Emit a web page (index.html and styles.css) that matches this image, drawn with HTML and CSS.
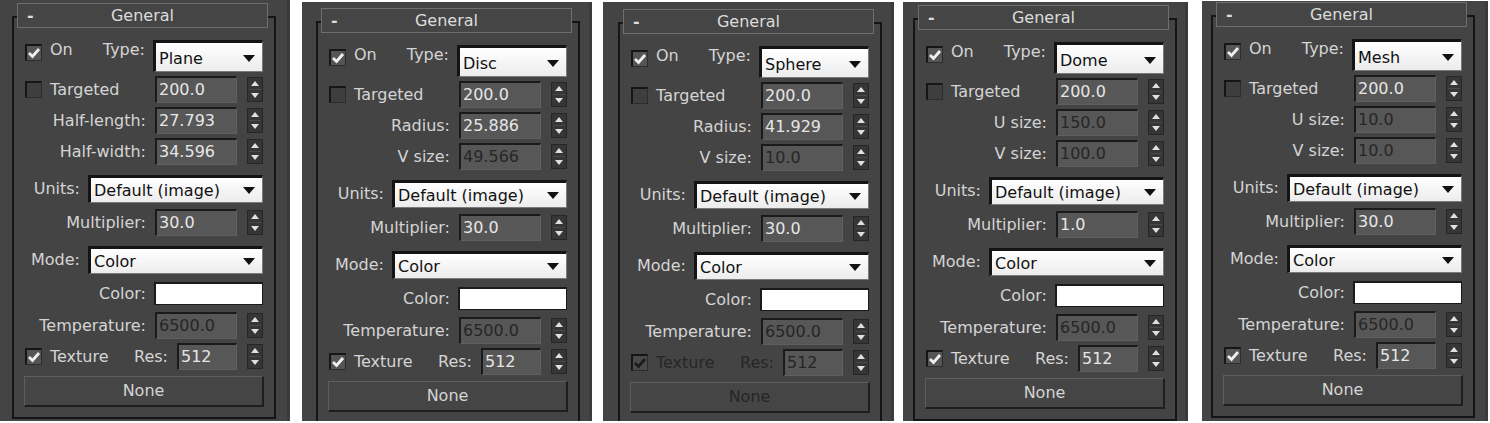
FILE: index.html
```html
<!DOCTYPE html>
<html lang="en">
<head>
  <meta charset="UTF-8" />
  <title>VRayLight General rollouts</title>
  <link rel="stylesheet" href="styles.css">
</head>
<body>
<div class="sheet">

  <!-- Plane -->
  <div class="panel p1">
    <div class="frame">
      <div class="head"><span class="dash">-</span><span class="title">General</span></div>
      <div class="row type">
        <span class="check on"></span><span class="lbl cb-lbl">On</span>
        <span class="lbl push">Type:</span>
        <span class="drop short"><span>Plane</span><i class="arrow"></i></span>
      </div>
      <div class="row">
        <span class="check"></span><span class="lbl cb-lbl">Targeted</span>
        <span class="num push">200.0</span><span class="spin"></span>
      </div>
      <div class="row right"><span class="lbl">Half-length:</span><span class="num">27.793</span><span class="spin"></span></div>
      <div class="row right"><span class="lbl">Half-width:</span><span class="num">34.596</span><span class="spin"></span></div>
      <div class="row right wide"><span class="lbl">Units:</span><span class="drop long"><span>Default (image)</span><i class="arrow"></i></span></div>
      <div class="row right mid"><span class="lbl">Multiplier:</span><span class="num">30.0</span><span class="spin"></span></div>
      <div class="row right wide"><span class="lbl">Mode:</span><span class="drop long"><span>Color</span><i class="arrow"></i></span></div>
      <div class="row right swatch-row"><span class="lbl">Color:</span><span class="swatch"></span></div>
      <div class="row right mid"><span class="lbl">Temperature:</span><span class="num off">6500.0</span><span class="spin"></span></div>
      <div class="row">
        <span class="check on"></span><span class="lbl cb-lbl">Texture</span>
        <span class="lbl push">Res:</span><span class="num res">512</span><span class="spin"></span>
      </div>
      <div class="btn">None</div>
    </div>
  </div>

  <!-- Disc -->
  <div class="panel p2">
    <div class="frame">
      <div class="head"><span class="dash">-</span><span class="title">General</span></div>
      <div class="row type">
        <span class="check on"></span><span class="lbl cb-lbl">On</span>
        <span class="lbl push">Type:</span>
        <span class="drop short"><span>Disc</span><i class="arrow"></i></span>
      </div>
      <div class="row">
        <span class="check"></span><span class="lbl cb-lbl">Targeted</span>
        <span class="num push">200.0</span><span class="spin"></span>
      </div>
      <div class="row right"><span class="lbl">Radius:</span><span class="num">25.886</span><span class="spin"></span></div>
      <div class="row right"><span class="lbl">V size:</span><span class="num off">49.566</span><span class="spin"></span></div>
      <div class="row right wide"><span class="lbl">Units:</span><span class="drop long"><span>Default (image)</span><i class="arrow"></i></span></div>
      <div class="row right mid"><span class="lbl">Multiplier:</span><span class="num">30.0</span><span class="spin"></span></div>
      <div class="row right wide"><span class="lbl">Mode:</span><span class="drop long"><span>Color</span><i class="arrow"></i></span></div>
      <div class="row right swatch-row"><span class="lbl">Color:</span><span class="swatch"></span></div>
      <div class="row right mid"><span class="lbl">Temperature:</span><span class="num off">6500.0</span><span class="spin"></span></div>
      <div class="row">
        <span class="check on"></span><span class="lbl cb-lbl">Texture</span>
        <span class="lbl push">Res:</span><span class="num res">512</span><span class="spin"></span>
      </div>
      <div class="btn">None</div>
    </div>
  </div>

  <!-- Sphere -->
  <div class="panel p3">
    <div class="frame">
      <div class="head"><span class="dash">-</span><span class="title">General</span></div>
      <div class="row type">
        <span class="check on"></span><span class="lbl cb-lbl">On</span>
        <span class="lbl push">Type:</span>
        <span class="drop short"><span>Sphere</span><i class="arrow"></i></span>
      </div>
      <div class="row">
        <span class="check"></span><span class="lbl cb-lbl">Targeted</span>
        <span class="num push">200.0</span><span class="spin"></span>
      </div>
      <div class="row right"><span class="lbl">Radius:</span><span class="num">41.929</span><span class="spin"></span></div>
      <div class="row right"><span class="lbl">V size:</span><span class="num off">10.0</span><span class="spin"></span></div>
      <div class="row right wide"><span class="lbl">Units:</span><span class="drop long"><span>Default (image)</span><i class="arrow"></i></span></div>
      <div class="row right mid"><span class="lbl">Multiplier:</span><span class="num">30.0</span><span class="spin"></span></div>
      <div class="row right wide"><span class="lbl">Mode:</span><span class="drop long"><span>Color</span><i class="arrow"></i></span></div>
      <div class="row right swatch-row"><span class="lbl">Color:</span><span class="swatch"></span></div>
      <div class="row right mid"><span class="lbl">Temperature:</span><span class="num off">6500.0</span><span class="spin"></span></div>
      <div class="row disabled">
        <span class="check on"></span><span class="lbl cb-lbl">Texture</span>
        <span class="lbl push">Res:</span><span class="num res off">512</span><span class="spin"></span>
      </div>
      <div class="btn off">None</div>
    </div>
  </div>

  <!-- Dome -->
  <div class="panel p4">
    <div class="frame">
      <div class="head"><span class="dash">-</span><span class="title">General</span></div>
      <div class="row type">
        <span class="check on"></span><span class="lbl cb-lbl">On</span>
        <span class="lbl push">Type:</span>
        <span class="drop short"><span>Dome</span><i class="arrow"></i></span>
      </div>
      <div class="row">
        <span class="check"></span><span class="lbl cb-lbl">Targeted</span>
        <span class="num push">200.0</span><span class="spin"></span>
      </div>
      <div class="row right"><span class="lbl">U size:</span><span class="num off">150.0</span><span class="spin"></span></div>
      <div class="row right"><span class="lbl">V size:</span><span class="num off">100.0</span><span class="spin"></span></div>
      <div class="row right wide"><span class="lbl">Units:</span><span class="drop long"><span>Default (image)</span><i class="arrow"></i></span></div>
      <div class="row right mid"><span class="lbl">Multiplier:</span><span class="num">1.0</span><span class="spin"></span></div>
      <div class="row right wide"><span class="lbl">Mode:</span><span class="drop long"><span>Color</span><i class="arrow"></i></span></div>
      <div class="row right swatch-row"><span class="lbl">Color:</span><span class="swatch"></span></div>
      <div class="row right mid"><span class="lbl">Temperature:</span><span class="num off">6500.0</span><span class="spin"></span></div>
      <div class="row">
        <span class="check on"></span><span class="lbl cb-lbl">Texture</span>
        <span class="lbl push">Res:</span><span class="num res">512</span><span class="spin"></span>
      </div>
      <div class="btn">None</div>
    </div>
  </div>

  <!-- Mesh -->
  <div class="panel p5">
    <div class="frame">
      <div class="head"><span class="dash">-</span><span class="title">General</span></div>
      <div class="row type">
        <span class="check on"></span><span class="lbl cb-lbl">On</span>
        <span class="lbl push">Type:</span>
        <span class="drop short"><span>Mesh</span><i class="arrow"></i></span>
      </div>
      <div class="row">
        <span class="check"></span><span class="lbl cb-lbl">Targeted</span>
        <span class="num push">200.0</span><span class="spin"></span>
      </div>
      <div class="row right"><span class="lbl">U size:</span><span class="num off">10.0</span><span class="spin"></span></div>
      <div class="row right"><span class="lbl">V size:</span><span class="num off">10.0</span><span class="spin"></span></div>
      <div class="row right wide"><span class="lbl">Units:</span><span class="drop long"><span>Default (image)</span><i class="arrow"></i></span></div>
      <div class="row right mid"><span class="lbl">Multiplier:</span><span class="num">30.0</span><span class="spin"></span></div>
      <div class="row right wide"><span class="lbl">Mode:</span><span class="drop long"><span>Color</span><i class="arrow"></i></span></div>
      <div class="row right swatch-row"><span class="lbl">Color:</span><span class="swatch"></span></div>
      <div class="row right mid"><span class="lbl">Temperature:</span><span class="num off">6500.0</span><span class="spin"></span></div>
      <div class="row">
        <span class="check on"></span><span class="lbl cb-lbl">Texture</span>
        <span class="lbl push">Res:</span><span class="num res">512</span><span class="spin"></span>
      </div>
      <div class="btn">None</div>
    </div>
  </div>

</div>
</body>
</html>
```

FILE: styles.css
```css
* { box-sizing: border-box; }
body { margin: 0; background: #fff; font-family: "DejaVu Sans", Verdana, sans-serif; font-size: 16px; color: #d6d6d6; }

.sheet { display: flex; height: 421px; }

.panel {
  flex-shrink: 0;
  background: #444;
  overflow: hidden;
  border-right: 3px solid #3b3b3b;
}
.p1 { width: 290px; margin-top: 0;  padding: 16px 0 0 12px; }
.p2 { width: 290px; margin-left: 12px; margin-top: 2px; padding: 19px 0 0 14px; }
.p3 { width: 291px; margin-left: 11px; margin-top: 2px; padding: 20px 0 0 15px; }
.p4 { width: 285px; margin-left: 9px;  margin-top: 2px; padding: 16px 0 0 10px; }
.p5 { width: 286px; margin-left: 14px; margin-top: 1px; padding: 14px 0 0 9px; }

/* group frame with the rollout header sitting on its top edge */
.frame {
  width: 264px;
  border: 2px solid #151515;
  padding: 0 11px 10px 10px;
}
.head {
  display: flex;
  align-items: center;
  height: 25px;
  margin: -15px -5px 0 -7px;
  background: #454545;
  border: 1px solid #6e6e6e;
  color: #dcdcdc;
}
.dash { width: 30px; padding-left: 9px; font-weight: bold; }
.title { flex: 1; text-align: center; padding-right: 30px; }

.row { display: flex; align-items: center; height: 27px; margin-top: 4px; }
.row.type { height: 32px; margin-top: 12px; align-items: flex-start; }
.row.type .check { margin-top: 4px; }
.row.type .lbl { line-height: 19px; }
.row.right { justify-content: flex-end; }
.row.wide { margin-top: 10px; }
.row.mid { margin-top: 7px; }
.row.swatch-row { height: 23px; margin-top: 9px; }
.row .push { margin-left: auto; }

.lbl { color: #d4d4d4; white-space: nowrap; }
.cb-lbl { margin-left: 8px; }

.check {
  width: 17px;
  height: 17px;
  margin-left: 1px;
  background: #3e3e3e;
  border-top: 2px solid #161616;
  border-left: 2px solid #161616;
  border-bottom: 1px solid #2c2c2c;
  border-right: 1px solid #2c2c2c;
}
.check.on {
  background: #555 url("data:image/svg+xml,%3Csvg xmlns='http://www.w3.org/2000/svg' width='14' height='14'%3E%3Cpolyline points='2,7 5.5,10.5 12,3' fill='none' stroke='%23f0f0f0' stroke-width='2.8'/%3E%3C/svg%3E") no-repeat center;
}

.num {
  width: 82px;
  height: 27px;
  margin-left: 9px;
  padding: 1px 0 0 2px;
  background: #575757;
  border-top: 2px solid #1a1a1a;
  border-left: 2px solid #1a1a1a;
  border-bottom: 1px solid #5f5f5f;
  border-right: 1px solid #5f5f5f;
  color: #e6e6e6;
  line-height: 22px;
}
.num.res { width: 60px; }
.num.off { color: #262626; }

.spin {
  width: 16px;
  height: 25px;
  margin-left: 10px;
  background: #333 url("data:image/svg+xml,%3Csvg xmlns='http://www.w3.org/2000/svg' width='16' height='25'%3E%3Crect x='0.5' y='0.5' width='15' height='24' fill='%23363636' stroke='%23262626'/%3E%3Cline x1='2' y1='12.5' x2='14' y2='12.5' stroke='%234a4a4a'/%3E%3Cpolygon points='8,4 12,9 4,9' fill='%23e0e0e0'/%3E%3Cpolygon points='4,16 12,16 8,21' fill='%23e0e0e0'/%3E%3C/svg%3E") no-repeat;
}

.drop {
  display: flex;
  align-items: center;
  margin-left: 8px;
  padding: 2px 0 0 3px;
  background: linear-gradient(#ffffff, #ececec);
  border-top: 3px solid #141414;
  border-left: 3px solid #141414;
  border-bottom: 1px solid #7a7a7a;
  border-right: 1px solid #7a7a7a;
  color: #111;
}
.drop span { flex: 1; }
.drop.short { width: 110px; height: 32px; }
.drop.long { width: 175px; height: 28px; }
.arrow {
  width: 0;
  height: 0;
  margin-right: 7px;
  border-left: 6px solid transparent;
  border-right: 6px solid transparent;
  border-top: 7px solid #111;
}

.swatch {
  width: 109px;
  height: 23px;
  margin-left: 8px;
  background: #fff;
  border: 1px solid #1a1a1a;
  border-top-width: 2px;
  border-left-width: 2px;
}

.row.disabled .lbl { color: #262626; }
.row.disabled .check.on {
  background: #4a4a4a url("data:image/svg+xml,%3Csvg xmlns='http://www.w3.org/2000/svg' width='14' height='14'%3E%3Cpolyline points='2,7 5.5,10.5 12,3' fill='none' stroke='%231c1c1c' stroke-width='2.8'/%3E%3C/svg%3E") no-repeat center;
}

.btn {
  height: 31px;
  margin: 6px -1px 0 0;
  background: #454545;
  border-top: 1px solid #5e5e5e;
  border-left: 1px solid #5e5e5e;
  border-bottom: 2px solid #1e1e1e;
  border-right: 2px solid #1e1e1e;
  text-align: center;
  line-height: 28px;
  color: #d4d4d4;
}
.btn.off { color: #262626; }
```
